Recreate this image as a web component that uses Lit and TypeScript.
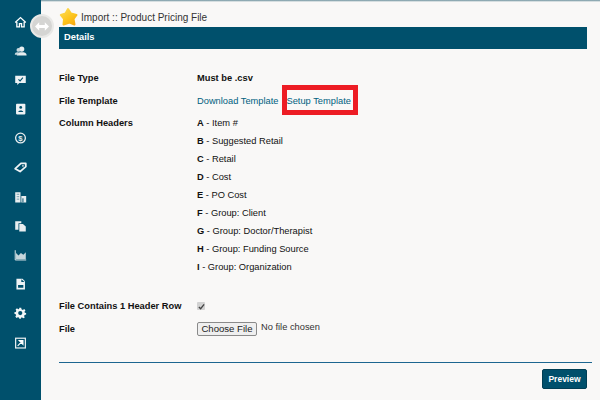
import { LitElement, html, css, svg } from "lit";
import { customElement } from "lit/decorators.js";

const icons = [
  svg`<path d="M1 8 L7.5 2 L14 8 M3 7.5 V13.5 H6.2 V9.5 H8.8 V13.5 H12 V7.5" fill="none" stroke="#fff" stroke-width="1.6"/>`,
  svg`<circle cx="9" cy="5" r="3.2" fill="#e8eef0"/><path d="M3 13 C3 9.5 6 9 9 9 S15 9.5 15 13 Z" fill="#e8eef0"/><circle cx="5" cy="6" r="2.4" fill="#c8d8de"/><path d="M0.5 12 C0.5 9 3 9 5 9 V12 Z" fill="#c8d8de"/>`,
  svg`<path d="M1 2 H14 V11 H6 L3.5 13.5 V11 H1 Z" fill="#eef3f5"/><path d="M5 6.5 L7 8.5 L10.5 4.5" fill="none" stroke="#00506c" stroke-width="1.3"/>`,
  svg`<rect x="2" y="1" width="11.5" height="13" rx="1" fill="#eef3f5"/><circle cx="7.8" cy="5.5" r="1.7" fill="#00506c"/><path d="M4.8 11 C4.8 8.5 10.8 8.5 10.8 11 Z" fill="#00506c"/>`,
  svg`<circle cx="7.5" cy="7.5" r="6" fill="none" stroke="#e8eef0" stroke-width="1.6"/><text x="7.5" y="10.8" font-size="9.5" font-weight="700" text-anchor="middle" fill="#e8eef0" font-family="Liberation Sans">$</text>`,
  svg`<path d="M1 9.5 L8 3 H14 L14 7 L7 13 Z" fill="none" stroke="#eef3f5" stroke-width="2.2" stroke-linejoin="round"/><circle cx="10.5" cy="6" r="1" fill="#eef3f5"/>`,
  svg`<path d="M1 1.5 H7.5 V14 H1 Z M8.5 6 H14.5 V14 H8.5 Z" fill="#e8eef0"/><path d="M3 4 H3.8 M5 4 H5.8 M3 7 H3.8 M5 7 H5.8 M3 10 H3.8 M5 10 H5.8 M10.5 9 V14" stroke="#00506c" stroke-width="1.2"/>`,
  svg`<path d="M1 1.5 H8.5 V4 H5 V12 H1 Z" fill="#e8eef0"/><path d="M6 5 H10.5 L14 8 V14 H6 Z" fill="#e8eef0"/>`,
  svg`<path d="M1 1.5 V13.5 H14.5" fill="none" stroke="#dfe8eb" stroke-width="1.2"/><path d="M2 5 L5 8 L8 5 L11 7 L14 4 V12.5 H2 Z" fill="#c6d6dc"/>`,
  svg`<path d="M2.5 1 H10 L13 4 V14 H2.5 Z" fill="#eef3f5"/><path d="M8.5 1.5 V5 H12.5 M4.5 8.5 H11 V12 H4.5 Z" fill="#00506c"/>`,
  svg`<path d="M6.5 1 H9 L9.4 3 L11.2 3.9 L13 2.8 L14.6 4.6 L13.3 6.2 L13.8 7.5 L15.5 8 V10 L13.6 10.5 L12.8 12 L13.7 13.8 L11.8 15 L10.3 13.8 L9 14 L8.5 15.5 H6.5 L6 14 L4.5 13.4 L2.8 14.5 L1.2 12.7 L2.3 11 L1.7 9.7 L0 9 V7 L1.9 6.5 L2.5 5 L1.6 3.3 L3.4 1.8 L5 2.9 L6.2 2.6 Z" fill="#f2f6f7" transform="scale(.93)"/><circle cx="7.2" cy="7.5" r="2.6" fill="#00506c"/>`,
  svg`<rect x="1.5" y="1.5" width="12" height="12" fill="#00506c" stroke="#e8eef0" stroke-width="1.5"/><path d="M4 11 L9.5 5.5 M6 4.5 H10.5 V9 Z" stroke="#fff" stroke-width="1.4" fill="#fff"/>`,
];

@customElement("app-root")
export class AppRoot extends LitElement {
  static styles = css`
    :host {
      display: flex;
      width: 600px;
      height: 400px;
      overflow: hidden;
      background: #f9f8f7;
      font-family: "Liberation Sans", Arial, sans-serif;
      font-size: 9.3px;
      color: #111;
      position: relative;
    }
    .side {
      width: 41px;
      flex: none;
      background: #00506c;
      display: flex;
      flex-direction: column;
      align-items: center;
      padding-top: 15.5px;
      box-sizing: border-box;
      gap: 16.2px;
      padding-right: 1px;
    }
    .side svg { width: 13px; height: 13px; display: block; }
    .toggle {
      position: absolute;
      left: 30px;
      top: 14px;
      width: 20px;
      height: 20px;
      border-radius: 50%;
      background: #d5d5d3;
      border: 2px solid #e9e9e7;
      display: flex;
      align-items: center;
      justify-content: center;
    }
    .toggle svg { width: 14px; height: 9px; }
    .shade {
      position: absolute;
      left: 41px;
      right: 0;
      top: 0;
      height: 2px;
      background: linear-gradient(#6b8f9c, #f9f8f7);
    }
    .main {
      flex: 1;
      padding: 7px 13px 0 18px;
      display: flex;
      flex-direction: column;
      min-width: 0;
    }
    .title {
      display: flex;
      align-items: center;
      height: 20px;
      color: #333;
      gap: 3px;
      flex: none;
      font-size: 10px;
    }
    .title svg { width: 19px; height: 20px; flex: none; }
    .bar {
      background: #00506c;
      color: #fff;
      font-weight: 700;
      height: 22px;
      line-height: 21px;
      padding-left: 5px;
      flex: none;
    }
    .form {
      display: grid;
      grid-template-columns: 138px 1fr;
      padding: 18px 0 0;
    }
    .lab { font-weight: 700; height: 22.5px; line-height: 22.5px; }
    .val { height: 22.5px; line-height: 22.5px; }
    .strong { font-weight: 700; }
    .links { display: flex; gap: 8px; color: #00607f; }
    a { color: #00607f; text-decoration: none; }
    .heads div { height: 18px; line-height: 18px; }
    .heads b { font-weight: 700; }
    .headsWrap { padding-top: 2px; }
    .spacer { height: 19px; grid-column: 1 / 3; }
    .chk {
      width: 8px; height: 8px; border-radius: 1px; background: #d2d2d2;
      display: flex; align-items: center; justify-content: center;
    }
    .chkrow { display: flex; align-items: center; }
    .filerow { display: flex; gap: 4px; color: #333; }
    .choose {
      width: 60px; height: 14px; line-height: 12px; box-sizing: border-box;
      border: 1px solid #8a8a8a; border-radius: 2px; background: #efefef;
      text-align: center; color: #222; font-size: 9.6px;
      font-family: inherit; padding: 0; margin-top: 4px;
    }
    .nofile { line-height: 14px; margin-top: 2px; }
    .rule { height: 1px; background: #1d6690; margin: 21.5px -5px 0 0; flex: none; }
    .foot { display: flex; justify-content: flex-end; padding-top: 6px; }
    .preview {
      width: 45px; height: 20px; border-radius: 2px; background: #00506c;
      color: #fff; font-weight: 700; font-size: 8.5px;
      display: flex; align-items: center; justify-content: center;
      border: 1px solid #003e54; box-sizing: border-box;
    }
    .mark {
      position: absolute;
      left: 282px;
      top: 85px;
      width: 76px;
      height: 30px;
      border: 5px solid #ed1c24;
      box-sizing: border-box;
    }
  `;

  render() {
    const cols = [
      ["A", "Item #"],
      ["B", "Suggested Retail"],
      ["C", "Retail"],
      ["D", "Cost"],
      ["E", "PO Cost"],
      ["F", "Group: Client"],
      ["G", "Group: Doctor/Therapist"],
      ["H", "Group: Funding Source"],
      ["I", "Group: Organization"],
    ];
    return html`
      <nav class="side">
        ${icons.map((i) => html`<svg viewBox="0 0 15 16">${i}</svg>`)}
      </nav>
      <div class="shade"></div>
      <div class="toggle">
        <svg viewBox="0 0 15 9"><path d="M0 4.5 L4.5 0 V3 H10.5 V0 L15 4.5 L10.5 9 V6 H4.5 V9 Z" fill="#fff"/></svg>
      </div>
      <main class="main">
        <div class="title">
          <svg viewBox="0 0 19 20">
            <defs><linearGradient id="g" x1="0.2" y1="0" x2="0.9" y2="1"><stop offset="0" stop-color="#fdd94e"/><stop offset=".55" stop-color="#fcc41c"/><stop offset="1" stop-color="#f6a80f"/></linearGradient></defs>
            <path d="M9 2 L12 6.5 L17.5 8 L14.5 12 L15.5 17.5 L10.5 15.5 L4.5 17.5 L5 12 L1.8 8 L6.5 6.5 Z" fill="url(#g)" stroke="url(#g)" stroke-width="2" stroke-linejoin="round"/>
          </svg>
          <span>Import :: Product Pricing File</span>
        </div>
        <div class="bar">Details</div>
        <div class="form">
          <div class="lab">File Type</div>
          <div class="val strong">Must be .csv</div>
          <div class="lab">File Template</div>
          <div class="val links">
            <a href="#">Download Template</a>
            <a href="#">Setup Template</a>
          </div>
          <div class="lab">Column Headers</div>
          <div class="headsWrap">
            <div class="heads">
              ${cols.map(([k, v]) => html`<div><b>${k}</b> - ${v}</div>`)}
            </div>
          </div>
          <div class="spacer"></div>
          <div class="lab">File Contains 1 Header Row</div>
          <div class="val chkrow">
            <span class="chk"><svg width="7" height="7" viewBox="0 0 8 8"><path d="M1 4.5 L3 6.5 L7 1.5" fill="none" stroke="#444" stroke-width="1.5"/></svg></span>
          </div>
          <div class="lab">File</div>
          <div class="val filerow">
            <button class="choose">Choose File</button>
            <span class="nofile">No file chosen</span>
          </div>
        </div>
        <div class="rule"></div>
        <div class="foot"><div class="preview">Preview</div></div>
      </main>
      <div class="mark"></div>
    `;
  }
}
